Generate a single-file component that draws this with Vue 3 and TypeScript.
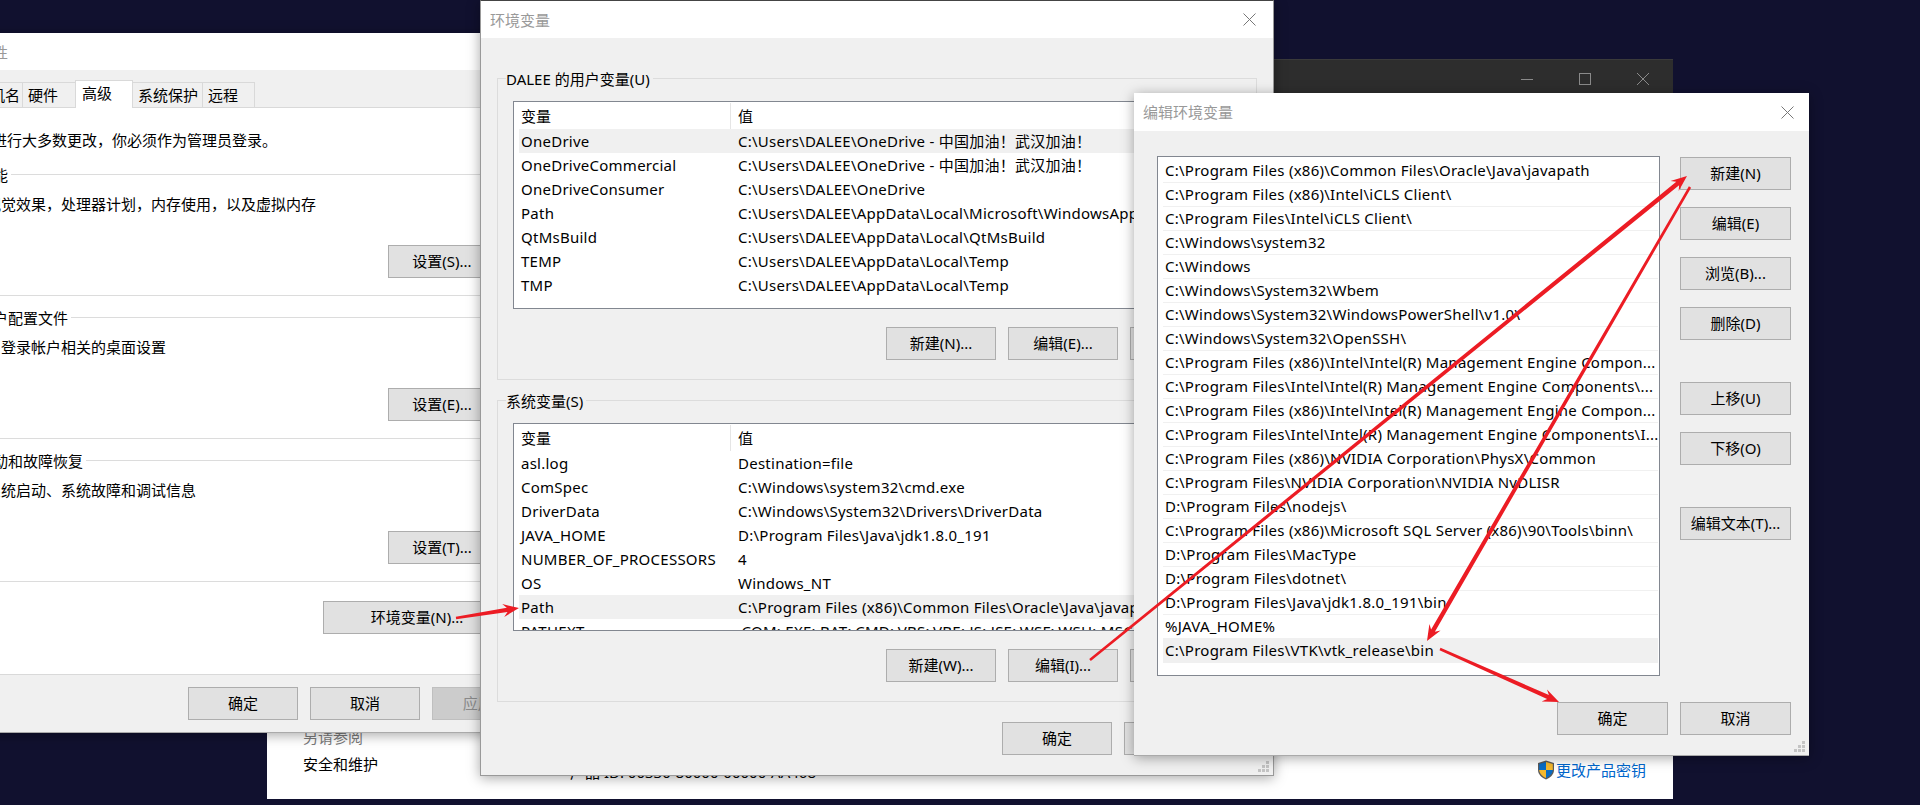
<script setup lang="ts">
interface Row { name: string; value: string; selected?: boolean }

const userVars: Row[] = [
  { name: 'OneDrive', value: 'C:\\Users\\DALEE\\OneDrive - 中国加油！武汉加油！', selected: true },
  { name: 'OneDriveCommercial', value: 'C:\\Users\\DALEE\\OneDrive - 中国加油！武汉加油！' },
  { name: 'OneDriveConsumer', value: 'C:\\Users\\DALEE\\OneDrive' },
  { name: 'Path', value: 'C:\\Users\\DALEE\\AppData\\Local\\Microsoft\\WindowsApps' },
  { name: 'QtMsBuild', value: 'C:\\Users\\DALEE\\AppData\\Local\\QtMsBuild' },
  { name: 'TEMP', value: 'C:\\Users\\DALEE\\AppData\\Local\\Temp' },
  { name: 'TMP', value: 'C:\\Users\\DALEE\\AppData\\Local\\Temp' },
]
const sysVars: Row[] = [
  { name: 'asl.log', value: 'Destination=file' },
  { name: 'ComSpec', value: 'C:\\Windows\\system32\\cmd.exe' },
  { name: 'DriverData', value: 'C:\\Windows\\System32\\Drivers\\DriverData' },
  { name: 'JAVA_HOME', value: 'D:\\Program Files\\Java\\jdk1.8.0_191' },
  { name: 'NUMBER_OF_PROCESSORS', value: '4' },
  { name: 'OS', value: 'Windows_NT' },
  { name: 'Path', value: 'C:\\Program Files (x86)\\Common Files\\Oracle\\Java\\javapath', selected: true },
  { name: 'PATHEXT', value: '.COM;.EXE;.BAT;.CMD;.VBS;.VBE;.JS;.JSE;.WSF;.WSH;.MSC' },
]
const pathItems: string[] = [
  'C:\\Program Files (x86)\\Common Files\\Oracle\\Java\\javapath',
  'C:\\Program Files (x86)\\Intel\\iCLS Client\\',
  'C:\\Program Files\\Intel\\iCLS Client\\',
  'C:\\Windows\\system32',
  'C:\\Windows',
  'C:\\Windows\\System32\\Wbem',
  'C:\\Windows\\System32\\WindowsPowerShell\\v1.0\\',
  'C:\\Windows\\System32\\OpenSSH\\',
  'C:\\Program Files (x86)\\Intel\\Intel(R) Management Engine Compon...',
  'C:\\Program Files\\Intel\\Intel(R) Management Engine Components\\...',
  'C:\\Program Files (x86)\\Intel\\Intel(R) Management Engine Compon...',
  'C:\\Program Files\\Intel\\Intel(R) Management Engine Components\\I...',
  'C:\\Program Files (x86)\\NVIDIA Corporation\\PhysX\\Common',
  'C:\\Program Files\\NVIDIA Corporation\\NVIDIA NvDLISR',
  'D:\\Program Files\\nodejs\\',
  'C:\\Program Files (x86)\\Microsoft SQL Server (x86)\\90\\Tools\\binn\\',
  'D:\\Program Files\\MacType',
  'D:\\Program Files\\dotnet\\',
  'D:\\Program Files\\Java\\jdk1.8.0_191\\bin',
  '%JAVA_HOME%',
  'C:\\Program Files\\VTK\\vtk_release\\bin',
]
const tabs = [
  { label: '计算机名', w: 69 },
  { label: '硬件', w: 54 },
  { label: '高级', w: 58, active: true },
  { label: '系统保护', w: 71 },
  { label: '远程', w: 53 },
]
const perfGroups = [
  { legend: '性能', text: '视觉效果，处理器计划，内存使用，以及虚拟内存', btn: '设置(S)...' },
  { legend: '用户配置文件', text: '与登录帐户相关的桌面设置', btn: '设置(E)...' },
  { legend: '启动和故障恢复', text: '系统启动、系统故障和调试信息', btn: '设置(T)...' },
]

function arrow(x1: number, y1: number, x2: number, y2: number): string {
  const len = Math.hypot(x2 - x1, y2 - y1)
  const ux = (x2 - x1) / len
  const uy = (y2 - y1) / len
  const nx = -uy
  const ny = ux
  const p = (along: number, side: number) =>
    `${(x1 + ux * along + nx * side).toFixed(1)},${(y1 + uy * along + ny * side).toFixed(1)}`
  const head = len - 15
  return [
    p(0, -1.3), p(head + 3, -2.2), p(head - 1, -6.5), p(len, 0),
    p(head - 1, 6.5), p(head + 3, 2.2), p(0, 1.3),
  ].join(' ')
}
const arrows: string[] = [
  arrow(456, 618, 519, 608),
  arrow(1090, 660, 1687, 176),
  arrow(1690, 187, 1427, 641),
  arrow(1440, 649, 1559, 702),
]
</script>

<template>
  <div class="desktop">
    <!-- background system window -->
    <section class="win sys">
      <header class="sys-title">
        <svg class="ctl" width="14" height="14" viewBox="0 0 14 14"><path d="M1 7.5h12" stroke="#8a8a8a" fill="none" /></svg>
        <svg class="ctl" width="14" height="14" viewBox="0 0 14 14"><rect x="1.5" y="1.5" width="11" height="11" stroke="#8a8a8a" fill="none" /></svg>
        <svg class="ctl" width="14" height="14" viewBox="0 0 14 14"><path d="M1 1l12 12M13 1L1 13" stroke="#8a8a8a" fill="none" /></svg>
      </header>
      <div class="sys-body">
        <div class="sys-aside">
          <div class="see-also">另请参阅</div>
          <div class="sys-link">安全和维护</div>
        </div>
        <div class="product-id">产品 ID: 00330-80000-00000-AA468</div>
        <div class="change-key">
          <svg width="18" height="20" viewBox="0 0 18 20">
            <path d="M9 .5 L17 3 V10 C17 14.5 13 18 9 19.5 C5 18 1 14.5 1 10 V3 Z" fill="#5b5b5b" />
            <path d="M9 2 V10 H2.2 V3.9 Z" fill="#0a6cc4" />
            <path d="M9 2 L15.8 3.9 V10 H9 Z" fill="#f6b92d" />
            <path d="M9 10 H15.8 C15.6 13.6 12.4 16.6 9 18 Z" fill="#0a6cc4" />
            <path d="M9 10 V18 C5.6 16.6 2.4 13.6 2.2 10 Z" fill="#f6b92d" />
          </svg>
          <span>更改产品密钥</span>
        </div>
      </div>
    </section>

    <!-- system properties dialog -->
    <section class="win props">
      <header class="title"><span class="title-text">系统属性</span></header>
      <nav class="tabs">
        <div
          v-for="t in tabs"
          :key="t.label"
          class="tab"
          :class="{ active: t.active }"
          :style="{ width: t.w + 'px' }"
        >{{ t.label }}</div>
      </nav>
      <div class="props-body">
        <p class="admin-note">要进行大多数更改，你必须作为管理员登录。</p>
        <div v-for="g in perfGroups" :key="g.legend" class="pgroup">
          <div class="plegend">{{ g.legend }}</div>
          <div class="ptext">{{ g.text }}</div>
          <div class="pactions"><button class="btn w108">{{ g.btn }}</button></div>
        </div>
        <div class="env-row"><button class="btn env">环境变量(N)...</button></div>
      </div>
      <footer class="props-foot">
        <button class="btn w110">确定</button>
        <button class="btn w110">取消</button>
        <button class="btn w110 disabled">应用(A)</button>
      </footer>
    </section>

    <!-- environment variables dialog -->
    <section class="win env-win">
      <header class="title">
        <span class="title-text">环境变量</span>
        <svg class="close" width="13" height="13" viewBox="0 0 13 13"><path d="M.5.5l12 12M12.5.5l-12 12" stroke="#777" fill="none" /></svg>
      </header>
      <div class="env-body">
        <div class="vgroup">
          <div class="vlegend">DALEE 的用户变量(U)</div>
          <div class="vlist">
            <div class="vhead"><span class="c1">变量</span><span class="c2">值</span></div>
            <div v-for="r in userVars" :key="r.name" class="vrow" :class="{ sel: r.selected }">
              <span class="c1">{{ r.name }}</span><span class="c2">{{ r.value }}</span>
            </div>
          </div>
          <div class="vactions">
            <button class="btn w110">新建(N)...</button>
            <button class="btn w110">编辑(E)...</button>
            <button class="btn w110">删除(L)</button>
          </div>
        </div>
        <div class="vgroup">
          <div class="vlegend">系统变量(S)</div>
          <div class="vlist">
            <div class="vhead"><span class="c1">变量</span><span class="c2">值</span></div>
            <div v-for="r in sysVars" :key="r.name" class="vrow" :class="{ sel: r.selected }">
              <span class="c1">{{ r.name }}</span><span class="c2">{{ r.value }}</span>
            </div>
          </div>
          <div class="vactions">
            <button class="btn w110">新建(W)...</button>
            <button class="btn w110">编辑(I)...</button>
            <button class="btn w110">删除(L)</button>
          </div>
        </div>
        <div class="env-foot">
          <button class="btn w110">确定</button>
          <button class="btn w110">取消</button>
        </div>
      </div>
      <svg class="grip" width="12" height="12" viewBox="0 0 12 12">
        <path d="M8 0h3v3H8zM4 4h3v3H4zM8 4h3v3H8zM0 8h3v3H0zM4 8h3v3H4zM8 8h3v3H8z" fill="#c4c4c4" />
      </svg>
    </section>

    <!-- edit dialog -->
    <section class="win edit-win">
      <header class="title">
        <span class="title-text">编辑环境变量</span>
        <svg class="close" width="13" height="13" viewBox="0 0 13 13"><path d="M.5.5l12 12M12.5.5l-12 12" stroke="#777" fill="none" /></svg>
      </header>
      <div class="edit-body">
        <div class="edit-list">
          <div
            v-for="(p, i) in pathItems"
            :key="i"
            class="edit-row"
            :class="{ sel: i === pathItems.length - 1 }"
          >{{ p }}</div>
        </div>
        <div class="edit-side">
          <button class="btn w111">新建(N)</button>
          <button class="btn w111">编辑(E)</button>
          <button class="btn w111">浏览(B)...</button>
          <button class="btn w111">删除(D)</button>
          <button class="btn w111 gap-a">上移(U)</button>
          <button class="btn w111">下移(O)</button>
          <button class="btn w111 gap-b">编辑文本(T)...</button>
        </div>
      </div>
      <footer class="edit-foot">
        <button class="btn w111">确定</button>
        <button class="btn w111">取消</button>
      </footer>
      <svg class="grip" width="12" height="12" viewBox="0 0 12 12">
        <path d="M8 0h3v3H8zM4 4h3v3H4zM8 4h3v3H8zM0 8h3v3H0zM4 8h3v3H4zM8 8h3v3H8z" fill="#c4c4c4" />
      </svg>
    </section>

    <!-- red annotation arrows -->
    <svg class="arrows" width="1920" height="805" viewBox="0 0 1920 805">
      <polygon v-for="(pts, i) in arrows" :key="i" :points="pts" fill="#ec1c24" />
    </svg>
  </div>
</template>

<style>
html, body { margin: 0; background: #11112f; overflow: hidden; }
</style>

<style scoped>
.desktop {
  position: relative;
  width: 1920px;
  height: 805px;
  overflow: hidden;
  background: #11112f;
  color: #000;
  font-family: "Noto Sans", "Noto Sans CJK SC", sans-serif;
  font-size: 15px;
  line-height: 20px;
}
.win {
  position: absolute;
  box-sizing: border-box;
  display: flex;
  flex-direction: column;
  background: #f0f0f0;
  box-shadow: 0 2px 12px rgba(0, 0, 0, 0.35);
}
.title {
  display: flex;
  align-items: center;
  justify-content: space-between;
  flex: none;
  background: #fff;
}
.title-text { color: #999; }
.btn {
  box-sizing: border-box;
  flex: none;
  height: 33px;
  padding: 0 0 2px;
  border: 1px solid #adadad;
  background: #e1e1e1;
  color: #000;
  font: inherit;
  white-space: nowrap;
}
.btn.disabled { background: #ccc; border-color: #bfbfbf; color: #8a8a8a; }
.w108 { width: 108px; }
.w110 { width: 110px; }
.w111 { width: 111px; }

/* system window */
.sys {
  left: 267px;
  top: 59px;
  width: 1406px;
  height: 740px;
  background: #fff;
  box-shadow: none;
}
.sys-title {
  flex: none;
  height: 34px;
  box-sizing: border-box;
  display: flex;
  align-items: center;
  justify-content: flex-end;
  gap: 44px;
  padding: 4px 23px 0 0;
  background: #2d2d2d;
  border-top: 1px solid #3a3a3a;
}
.ctl { flex: none; }
.sys-body {
  flex: 1;
  display: flex;
  align-items: flex-end;
  padding: 0 27px 19px 36px;
}
.sys-aside { width: 267px; flex: none; margin-bottom: 6px; }
.see-also { color: #7a7a7a; margin-bottom: 7px; }
.sys-link { color: #000; }
.product-id { white-space: nowrap; margin-bottom: -2px; }
.change-key {
  margin-left: auto;
  display: flex;
  align-items: center;
  gap: 1px;
  color: #0066cc;
}

/* system properties */
.props {
  left: -100px;
  top: 33px;
  width: 660px;
  height: 700px;
  border-bottom: 1px solid #aaa;
}
.props .title { height: 37px; padding-left: 48px; }
.tabs {
  flex: none;
  height: 38px;
  box-sizing: border-box;
  display: flex;
  align-items: flex-end;
  padding-left: 55px;
  border-bottom: 1px solid #d9d9d9;
}
.tab {
  box-sizing: border-box;
  height: 25px;
  padding: 0 0 0 5px;
  background: #f0f0f0;
  border: 1px solid #d9d9d9;
  border-bottom: 0;
  margin-left: -1px;
  line-height: 25px;
  white-space: nowrap;
}
.tab.active {
  height: 28px;
  margin-bottom: -1px;
  padding-left: 6px;
  background: #fff;
  line-height: 24px;
  position: relative;
}
.props-body {
  flex: 1;
  background: #fff;
  padding: 22px 19px 0 70px;
  border-bottom: 1px solid #d9d9d9;
}
.admin-note { margin: 0 0 24px 7px; }
.pgroup {
  box-sizing: border-box;
  height: 122px;
  margin-bottom: 21px;
  padding: 0 44px 0 15px;
  border: 1px solid #dcdcdc;
}
.plegend {
  width: fit-content;
  margin: -10px 0 0 -8px;
  padding-right: 3px;
  background: #fff;
}
.ptext { margin-top: 9px; }
.pactions { display: flex; justify-content: flex-end; margin-top: 31px; }
.env-row { display: flex; justify-content: flex-end; margin: -2px 30px 0 0; }
.env { width: 188px; }
.props-foot {
  flex: none;
  height: 57px;
  box-sizing: border-box;
  display: flex;
  gap: 12px;
  padding: 12px 0 0 288px;
}

/* environment variables */
.env-win {
  left: 480px;
  top: 0;
  width: 794px;
  height: 776px;
  border: 1px solid #999;
  border-top-color: #444;
}
.env-win .title { height: 37px; padding: 0 17px 0 9px; }
.env-body { padding: 40px 16px 0; }
.vgroup {
  box-sizing: border-box;
  height: 302px;
  margin-bottom: 20px;
  padding: 0 14px 0 15px;
  border: 1px solid #dcdcdc;
}
.vlegend {
  width: fit-content;
  margin: -10px 0 0 -7px;
  padding: 0 3px 0 0;
  background: #f0f0f0;
}
.vlist {
  box-sizing: border-box;
  height: 208px;
  margin-top: 12px;
  padding: 1px 0 0 5px;
  overflow: hidden;
  background: #fff;
  border: 1px solid #828790;
  white-space: nowrap;
}
.vhead, .vrow { display: flex; align-items: center; padding-left: 2px; }
.vhead { height: 26px; }
.vrow { height: 24px; letter-spacing: 0.25px; }
.vrow.sel { background: #f0f0f0; }
.c1 { flex: none; width: 217px; box-sizing: border-box; }
.vhead .c1 { height: 26px; line-height: 26px; border-right: 1px solid #e5e5e5; width: 210px; margin-right: 7px; }
.vactions { display: flex; justify-content: flex-end; gap: 12px; margin-top: 18px; padding-right: 2px; }
.env-foot { display: flex; gap: 12px; margin: 2px 0 0 505px; }
.grip { position: absolute; right: 3px; bottom: 2px; }

/* edit dialog */
.edit-win {
  left: 1134px;
  top: 93px;
  width: 675px;
  height: 663px;
  border-bottom: 1px solid #aaa;
}
.edit-win .title { height: 38px; padding: 0 15px 0 9px; }
.edit-body { display: flex; gap: 20px; padding: 25px 0 0 23px; }
.edit-list {
  box-sizing: border-box;
  flex: none;
  width: 503px;
  height: 520px;
  padding: 2px 1px 0 5px;
  background: #fff;
  border: 1px solid #828790;
  overflow: hidden;
}
.edit-row {
  box-sizing: border-box;
  height: 24px;
  padding-left: 2px;
  line-height: 22px;
  letter-spacing: 0.25px;
  white-space: nowrap;
  border-bottom: 1px solid #f0f0f0;
}
.edit-row.sel { background: #f0f0f0; }
.edit-side { display: flex; flex-direction: column; gap: 17px; padding-top: 1px; }
.gap-a { margin-top: 25px; }
.gap-b { margin-top: 25px; }
.edit-foot { display: flex; justify-content: flex-end; gap: 12px; padding: 26px 18px 0 0; }

.arrows { position: absolute; left: 0; top: 0; pointer-events: none; }
</style>
